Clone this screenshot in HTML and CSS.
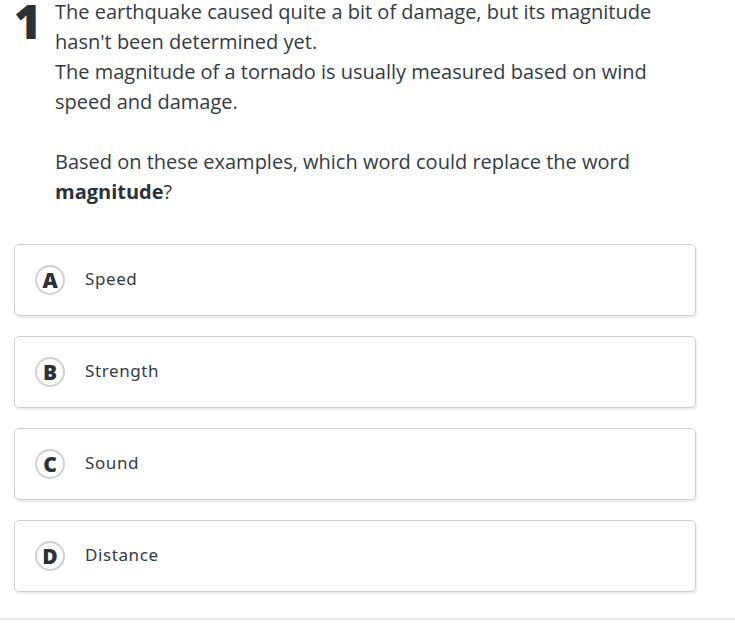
FILE: index.html
```html
<!DOCTYPE html>
<html>
<head>
<meta charset="utf-8">
<link rel="stylesheet" href="styles.css">
</head>
<body>
<div class="page">
  <div class="question">
    <div class="qnum">1</div>
    <div class="qtext">
      <p>The earthquake caused quite a bit of damage, but its magnitude hasn't been determined yet.<br>The magnitude of a tornado is usually measured based on wind speed and damage.</p>
      <p>Based on these examples, which word could replace the word <b>magnitude</b>?</p>
    </div>
  </div>
  <div class="options">
    <div class="option"><span class="badge">A</span><span class="label">Speed</span></div>
    <div class="option"><span class="badge">B</span><span class="label">Strength</span></div>
    <div class="option"><span class="badge">C</span><span class="label">Sound</span></div>
    <div class="option"><span class="badge">D</span><span class="label">Distance</span></div>
  </div>
  <div class="divider"></div>
</div>
</body>
</html>
```
FILE: styles.css
```css
html, body { margin: 0; padding: 0; background: #fff; }
body { font-family: "Open Sans", sans-serif; color: #333c45; overflow: hidden; }
.page { padding: 0 0 0 14px; margin-top: -3px; }
.question { display: flex; align-items: flex-start; }
.qnum { font-family: "Open Sans", sans-serif; font-size: 47px; font-weight: 800; line-height: 46px; width: 41px; color: #2b3138; margin-top: 1px; }
.qtext { width: 615px; font-size: 20px; line-height: 30px; }
.qtext p { margin: 0 0 30px 0; }
.qtext p:last-child { margin-bottom: 0; }
.qtext b { font-weight: 700; color: #2b3138; }
.options { display: flex; flex-direction: column; gap: 20px; margin-top: 37px; width: 682px; }
.option { height: 72px; border: 1px solid #cfcfcf; border-radius: 5px; box-shadow: 1px 2px 2px rgba(0,0,0,0.08); display: flex; align-items: center; padding-left: 20px; box-sizing: border-box; }
.badge { width: 26px; height: 26px; border: 2px solid #d0d0d0; border-radius: 50%; display: flex; align-items: center; justify-content: center; font-weight: 800; font-size: 21px; line-height: 1; color: #2b3138; font-family: "Open Sans", sans-serif; }
.label { margin-left: 20px; font-size: 17px; line-height: 20px; padding-bottom: 3px; color: #333c45; font-family: "Noto Sans", sans-serif; letter-spacing: 0.6px; }
.divider { height: 2px; background: #e6ebef; margin-left: -14px; margin-top: 26px; width: 735px; }
```
